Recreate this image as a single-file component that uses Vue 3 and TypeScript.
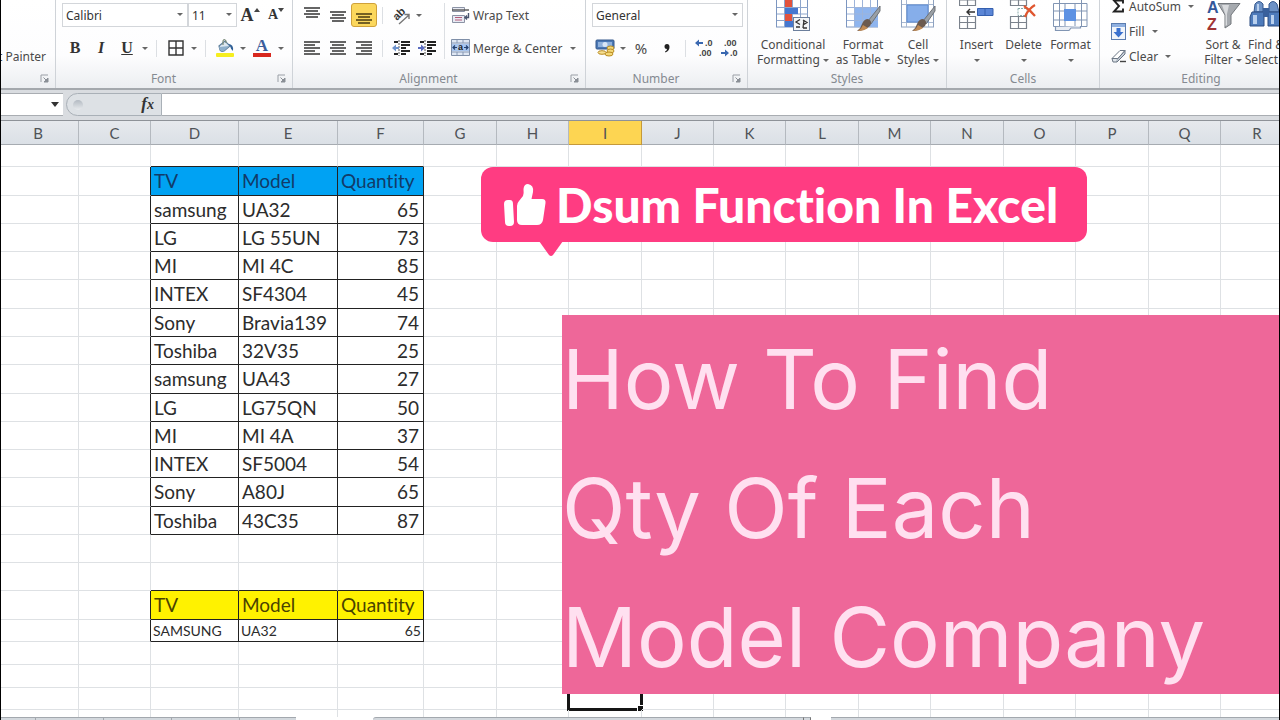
<script setup lang="ts">
interface Column {
  letter: string
  width: number
}

interface Row {
  height: number
  kind?: 'blue' | 'yellow' | 'data' | 'small'
  cells?: string[]
  cursor?: boolean
}

const columns: Column[] = [
  { letter: 'B', width: 81 },
  { letter: 'C', width: 72 },
  { letter: 'D', width: 88 },
  { letter: 'E', width: 99 },
  { letter: 'F', width: 86 },
  { letter: 'G', width: 73 },
  { letter: 'H', width: 72 },
  { letter: 'I', width: 73 },
  { letter: 'J', width: 72 },
  { letter: 'K', width: 72 },
  { letter: 'L', width: 73 },
  { letter: 'M', width: 72 },
  { letter: 'N', width: 73 },
  { letter: 'O', width: 72 },
  { letter: 'P', width: 73 },
  { letter: 'Q', width: 72 },
  { letter: 'R', width: 73 },
]

const rows: Row[] = [
  { height: 22 },
  { height: 29, kind: 'blue', cells: ['TV', 'Model', 'Quantity'] },
  { height: 28, kind: 'data', cells: ['samsung', 'UA32', '65'] },
  { height: 28, kind: 'data', cells: ['LG', 'LG 55UN', '73'] },
  { height: 28, kind: 'data', cells: ['MI', 'MI 4C', '85'] },
  { height: 29, kind: 'data', cells: ['INTEX', 'SF4304', '45'] },
  { height: 28, kind: 'data', cells: ['Sony', 'Bravia139', '74'] },
  { height: 28, kind: 'data', cells: ['Toshiba', '32V35', '25'] },
  { height: 29, kind: 'data', cells: ['samsung', 'UA43', '27'] },
  { height: 28, kind: 'data', cells: ['LG', 'LG75QN', '50'] },
  { height: 28, kind: 'data', cells: ['MI', 'MI 4A', '37'] },
  { height: 28, kind: 'data', cells: ['INTEX', 'SF5004', '54'] },
  { height: 29, kind: 'data', cells: ['Sony', 'A80J', '65'] },
  { height: 28, kind: 'data', cells: ['Toshiba', '43C35', '87'] },
  { height: 28 },
  { height: 28 },
  { height: 29, kind: 'yellow', cells: ['TV', 'Model', 'Quantity'] },
  { height: 22, kind: 'small', cells: ['SAMSUNG', 'UA32', '65'] },
  { height: 23 },
  { height: 23 },
  { height: 22, cursor: true },
  { height: 23 },
]

const FIRST = 2
const LAST = 4
const CURSOR_COL = 7

function text(row: Row, c: number): string {
  return row.cells && c >= FIRST && c <= LAST ? row.cells[c - FIRST] : ''
}

function cellClass(r: number, c: number): Record<string, boolean> {
  const row = rows[r]
  const inside = !!row.cells && c >= FIRST && c <= LAST
  const next = rows[r + 1]
  return {
    [row.kind ?? 'plain']: inside,
    num: inside && c === LAST && row.kind !== 'blue' && row.kind !== 'yellow',
    'edge-right': !!row.cells && c >= FIRST - 1 && c <= LAST,
    'edge-bottom': c >= FIRST && c <= LAST && (inside || !!next?.cells),
  }
}
</script>

<template>
  <div class="app">
    <header class="ribbon">
      <section class="group clipboard">
        <div class="tools">
          <div class="row"></div>
          <div class="row painter"><button>Format Painter</button></div>
        </div>
        <div class="caption"><span></span><button class="launch" aria-label="Clipboard options"><svg width="9" height="9" viewBox="0 0 9 9"><path d="M1 8V1H8" fill="none" stroke="#9a9fa6" /><path d="M3.5 3.5L8 8M8 4V8H4Z" fill="#8a8f96" stroke="#8a8f96" /></svg></button></div>
      </section>

      <section class="group font">
        <div class="tools">
          <div class="row">
            <span class="drop family"><select aria-label="Font"><option>Calibri</option></select><i class="tri"></i></span>
            <span class="drop size"><select aria-label="Font size"><option>11</option></select><i class="tri"></i></span>
            <button class="ic serif grow" aria-label="Increase font size">A<svg width="6" height="4" viewBox="0 0 6 4"><path d="M0 4L3 0L6 4Z" fill="#444" /></svg></button>
            <button class="ic serif shrink" aria-label="Decrease font size">A<svg width="6" height="4" viewBox="0 0 6 4"><path d="M0 0H6L3 4Z" fill="#444" /></svg></button>
          </div>
          <div class="row">
            <button class="ic serif">B</button>
            <button class="ic serif it">I</button>
            <button class="ic serif un">U</button>
            <button class="ar" aria-label="Underline styles"><i class="tri"></i></button>
            <i class="sep wide"></i>
            <button class="ic" aria-label="Borders"><svg width="16" height="16" viewBox="0 0 16 16"><path d="M1 1H15V15H1ZM8 1V15M1 8H15" fill="none" stroke="#333" stroke-width="1.4" /></svg></button>
            <button class="ar" aria-label="Border styles"><i class="tri"></i></button>
            <i class="sep wide"></i>
            <button class="ic" aria-label="Fill colour"><svg width="20" height="20" viewBox="0 0 20 20"><rect x="1" y="15" width="18" height="4" rx="1" fill="#f6ee1f" /><path d="M4 8L10 3L15 8L9 13Q7 14 5 12Z" fill="#dce8f1" stroke="#5e7f9c" stroke-width="1.2" /><path d="M4 9L14 8L9 13Q7 14 5 12Z" fill="#8eb0cc" /><path d="M8 7V3Q9 0 11 3V5" fill="none" stroke="#7a8a78" stroke-width="1.2" /><path d="M13 6Q19 6 18 13Q16 12 15 8Z" fill="#2f5f96" /></svg></button>
            <button class="ar" aria-label="Fill colours"><i class="tri"></i></button>
            <button class="ic serif tint" aria-label="Font colour">A</button>
            <button class="ar" aria-label="Font colours"><i class="tri"></i></button>
          </div>
        </div>
        <div class="caption"><span>Font</span><button class="launch" aria-label="Font options"><svg width="9" height="9" viewBox="0 0 9 9"><path d="M1 8V1H8" fill="none" stroke="#9a9fa6" /><path d="M3.5 3.5L8 8M8 4V8H4Z" fill="#8a8f96" stroke="#8a8f96" /></svg></button></div>
      </section>

      <section class="group align">
        <div class="tools split">
          <div>
            <div class="row">
              <button class="ic" aria-label="Top align"><svg width="16" height="18" viewBox="0 0 16 18"><path d="M0 2H16M2 5H14M0 8H16M2 11H14" stroke="#333" stroke-width="1.7" /></svg></button>
              <button class="ic" aria-label="Middle align"><svg width="16" height="18" viewBox="0 0 16 18"><path d="M0 6H16M2 9H14M0 12H16M2 15H14" stroke="#333" stroke-width="1.7" /></svg></button>
              <button class="ic on" aria-label="Bottom align"><svg width="16" height="18" viewBox="0 0 16 18"><path d="M0 8H16M2 11H14M0 14H16M2 17H14" stroke="#4a3b10" stroke-width="1.7" /></svg></button>
              <i class="sep"></i>
              <button class="ic" aria-label="Orientation"><svg width="24" height="22" viewBox="0 0 24 22"><text x="0" y="0" transform="translate(8 17) rotate(-45)" class="ab">ab</text><path d="M10 20L20 11M15.500 10.500H20V15" fill="none" stroke="#777" stroke-width="1.4" /></svg></button>
              <button class="ar" aria-label="Orientation options"><i class="tri"></i></button>
            </div>
            <div class="row">
              <button class="ic" aria-label="Align left"><svg width="16" height="14" viewBox="0 0 16 14"><path d="M0 1H16M0 4H11M0 7H16M0 10H11M0 13H16" stroke="#333" stroke-width="1.7" /></svg></button>
              <button class="ic" aria-label="Center"><svg width="16" height="14" viewBox="0 0 16 14"><path d="M0 1H16M2 4H14M0 7H16M2 10H14M0 13H16" stroke="#333" stroke-width="1.7" /></svg></button>
              <button class="ic" aria-label="Align right"><svg width="16" height="14" viewBox="0 0 16 14"><path d="M0 1H16M5 4H16M0 7H16M5 10H16M0 13H16" stroke="#333" stroke-width="1.7" /></svg></button>
              <i class="sep"></i>
              <button class="ic" aria-label="Decrease indent"><svg width="18" height="16" viewBox="0 0 18 16"><path d="M2 2H6M9 2H18M9 5H18M9 8H14M9 11H18M2 14H6M9 14H14" stroke="#222" stroke-width="1.8" /><path d="M7 0V16" stroke="#555" stroke-dasharray="2 1" /><path d="M0 8L4 4.500V7H7V9H4V11.500Z" fill="#6f93cc" /></svg></button>
              <button class="ic" aria-label="Increase indent"><svg width="18" height="16" viewBox="0 0 18 16"><path d="M2 2H6M9 2H18M9 5H18M9 8H14M9 11H18M2 14H6M9 14H14" stroke="#222" stroke-width="1.8" /><path d="M7 0V16" stroke="#555" stroke-dasharray="2 1" /><path d="M7 8L3 4.500V7H0V9H3V11.500Z" fill="#5a6cc0" /></svg></button>
            </div>
          </div>
          <i class="sep tall"></i>
          <div>
            <div class="row"><button class="lab"><svg width="19" height="18" viewBox="0 0 19 18"><path d="M1.500 1.500H13.500V5.500H1.500ZM1.500 9.500H13.500V16.500H1.500Z" fill="#e8eaf3" stroke="#8b93a5" /><path d="M1 4H18" stroke="#555" stroke-width="1.4" /><path d="M4 11.500H11M4 14H11" stroke="#b35a78" /><path d="M17.500 7V11.500H14M16 9.500L14 11.500L16 13.500" fill="none" stroke="#4a5670" stroke-width="1.4" /></svg>Wrap Text</button></div>
            <div class="row"><button class="lab"><svg width="19" height="18" viewBox="0 0 19 18"><path d="M.5.500H18.500V16.500H.5Z" fill="#dfe7f3" stroke="#7f8fa8" /><path d="M1 4H18M1 13H18M6 1V4M12 1V4M6 13V16M12 13V16" stroke="#8798b4" /><path d="M1 5H18V12H1Z" fill="#a9c6ee" /><path d="M2 8.500H6M13 8.500H17M4 6.500L2 8.500L4 10.500M15 6.500L17 8.500L15 10.500" fill="none" stroke="#23406f" stroke-width="1.2" /><text x="7" y="11" class="a">a</text></svg>Merge &amp; Center<i class="tri"></i></button></div>
          </div>
        </div>
        <div class="caption"><span>Alignment</span><button class="launch" aria-label="Alignment options"><svg width="9" height="9" viewBox="0 0 9 9"><path d="M1 8V1H8" fill="none" stroke="#9a9fa6" /><path d="M3.500 3.500L8 8M8 4V8H4Z" fill="#8a8f96" stroke="#8a8f96" /></svg></button></div>
      </section>

      <section class="group number">
        <div class="tools">
          <div class="row"><span class="drop format"><select aria-label="Number format"><option>General</option></select><i class="tri"></i></span></div>
          <div class="row">
            <button class="ic" aria-label="Accounting format"><svg width="20" height="18" viewBox="0 0 20 18"><rect x="1" y="1" width="18" height="9" rx="1" fill="#4b78b5" stroke="#34598c" /><rect x="3" y="3" width="14" height="5" fill="#8fb1dc" /><circle cx="10" cy="5.500" r="2.500" fill="#d9e6f6" /><ellipse cx="15.500" cy="9" rx="3.500" ry="2" fill="#f3d778" stroke="#b98b22" /><ellipse cx="15.500" cy="12" rx="3.500" ry="2" fill="#f3d778" stroke="#b98b22" /><ellipse cx="14" cy="15" rx="4" ry="2" fill="#f3d778" stroke="#b98b22" /><ellipse cx="7" cy="13.500" rx="4" ry="1.800" fill="#f6df92" stroke="#b98b22" /></svg></button>
            <button class="ar" aria-label="Currencies"><i class="tri"></i></button>
            <button class="ic pct">%</button>
            <button class="ic" aria-label="Comma style"><svg width="6" height="9" viewBox="0 0 6 9"><path d="M3 0Q5.500 0 5.500 3Q5.500 6.500 1.500 8.500L1 7.500Q3 6.500 3 5Q.5 5 .5 2.500Q.5 0 3 0Z" fill="#222" /></svg></button>
            <i class="sep"></i>
            <button class="ic" aria-label="Increase decimal"><svg width="20" height="20" viewBox="0 0 20 20"><text x="11" y="8" class="dec">.0</text><text x="5" y="18" class="dec">.00</text><path d="M1 5L5 1.500V4H9V6H5V8.500Z" fill="#3a68b0" /></svg></button>
            <button class="ic" aria-label="Decrease decimal"><svg width="20" height="20" viewBox="0 0 20 20"><text x="4" y="8" class="dec">.00</text><text x="10" y="18" class="dec">.0</text><path d="M9 15L5 11.500V14H1V16H5V18.500Z" fill="#3a68b0" /></svg></button>
          </div>
        </div>
        <div class="caption"><span>Number</span><button class="launch" aria-label="Number options"><svg width="9" height="9" viewBox="0 0 9 9"><path d="M1 8V1H8" fill="none" stroke="#9a9fa6" /><path d="M3.500 3.500L8 8M8 4V8H4Z" fill="#8a8f96" stroke="#8a8f96" /></svg></button></div>
      </section>

      <section class="group styles">
        <div class="bigs">
          <button class="big cond">
            <svg width="35" height="32" viewBox="0 0 35 32"><rect x=".5" y="-6" width="31" height="33" fill="#fff" stroke="#7c96c0" /><path d="M1 7.500H32M1 14H32M1 20.500H32M8.500 0V27M16.500 0V27M24.500 0V27" stroke="#8ea6cc" /><rect x="9" y="0" width="7" height="7" fill="#e2523c" /><rect x="9" y="8" width="13" height="6" fill="#4577cf" /><rect x="9" y="14" width="7" height="7" fill="#e2523c" /><rect x="9" y="21" width="8" height="6" fill="#4577cf" /><rect x="17.500" y="17.500" width="16" height="13" fill="#f4f6f8" stroke="#6c7f9c" /><path d="M24 19.500L20 22L24 24.500M20 27H24M27 20L31 22.500L27 25M27 28H31M28 20L27 28" fill="none" stroke="#333" stroke-width="1.3" /></svg>
            <span>Conditional</span><span>Formatting <i class="tri"></i></span>
          </button>
          <button class="big fmt">
            <svg width="35" height="32" viewBox="0 0 35 32"><rect x=".5" y="-6" width="31" height="33" fill="#fff" stroke="#7c96c0" /><rect x="9" y="8" width="23" height="19" fill="#8fb5ee" /><path d="M1 7.500H32M1 14H32M1 20.500H32M8.500 0V27M16.500 0V27M24.500 0V27" stroke="#9db4da" /><path d="M34 6L22 21L25 24L34 11Z" fill="#9aa0a6" stroke="#6d7176" /><path d="M22 19Q27 21 24 26Q18 31 11 31Q15 28 16 24Q18 19 22 19Z" fill="#6b5a50" /><path d="M12 31Q16 28 17 25L22 28Q18 31 12 31Z" fill="#c08a55" /></svg>
            <span>Format</span><span>as Table <i class="tri"></i></span>
          </button>
          <button class="big cell">
            <svg width="35" height="32" viewBox="0 0 35 32"><rect x=".5" y="-6" width="32" height="33" fill="#fff" stroke="#8ea2c0" /><path d="M1 4.500H32M1 22.500H32M5.500 0V27M27.500 0V27" stroke="#a9b9d2" /><rect x="6" y="5" width="21" height="17" fill="#86aeea" stroke="#5e8bd0" /><path d="M34 6L22 21L25 24L34 11Z" fill="#9aa0a6" stroke="#6d7176" /><path d="M22 19Q27 21 24 26Q18 31 11 31Q15 28 16 24Q18 19 22 19Z" fill="#6b5a50" /><path d="M12 31Q16 28 17 25L22 28Q18 31 12 31Z" fill="#c08a55" /></svg>
            <span>Cell</span><span>Styles <i class="tri"></i></span>
          </button>
        </div>
        <div class="caption plain"><span>Styles</span></div>
      </section>

      <section class="group cells">
        <div class="bigs">
          <button class="big std">
            <svg width="35" height="32" viewBox="0 0 35 32"><path d="M.5-4V5.500H16.500V-4M8.500 0V5.500M.5 0H16M.5 16.500H16.500V28.500H.5ZM8.500 16.500V28.500M.5 22.500H16.500" fill="#fff" stroke="#7b828c" stroke-width="1.2" /><path d="M18.500 8.500H34V15.500H18.500Z" fill="#5b86d6" stroke="#345fae" /><path d="M26 8.500V15.500" stroke="#345fae" /><path d="M8 12H16M11 9L8 12L11 15" fill="none" stroke="#333" stroke-width="1.4" /></svg>
            <span>Insert</span><span><i class="tri"></i></span>
          </button>
          <button class="big std">
            <svg width="35" height="32" viewBox="0 0 35 32"><path d="M4.500-4V5.500H20.500V-4M12.500 0V5.500M4.500 0H20M4.500 16.500H20.500V28.500H4.500ZM12.500 16.500V28.500M4.500 22.500H20.500" fill="#fff" stroke="#7b828c" stroke-width="1.2" /><path d="M12 8.500H21V15.500H12Z" fill="#fff" stroke="#8aa" stroke-dasharray="2 1" /><path d="M18 6Q24 10 29 16M29 5Q22 9 19 17" fill="none" stroke="#e0562f" stroke-width="2.200" /></svg>
            <span>Delete</span><span><i class="tri"></i></span>
          </button>
          <button class="big std">
            <svg width="35" height="32" viewBox="0 0 35 32"><path d="M.5 3.500H34V26.500H.5ZM6.500-1V26.500M28.500-1V26.500M.5 11H34M.5 20H34M12 3V26M22 3V26" fill="#fff" stroke="#8195b3" /><rect x="11" y="9" width="12" height="12" fill="#5d92e3" /><path d="M2.500 27V30.500H16L18 28H27.500V26" fill="#e9edf3" stroke="#8195b3" stroke-width="1.200" /></svg>
            <span>Format</span><span><i class="tri"></i></span>
          </button>
        </div>
        <div class="caption plain"><span>Cells</span></div>
      </section>

      <section class="group editing">
        <div class="bigs">
          <div class="stack">
            <button class="lab"><svg width="15" height="16" viewBox="0 0 15 16"><path d="M12 5.500V2.500H3L8 8L3 13.500H12V10.500" fill="none" stroke="#222" stroke-width="1.900" /></svg>AutoSum<i class="tri"></i></button>
            <button class="lab"><svg width="15" height="17" viewBox="0 0 15 17"><rect x=".5" y=".5" width="14" height="16" fill="#f1f5fa" stroke="#5b7db0" /><rect x="1" y="1" width="13" height="3" fill="#8fb0e0" /><path d="M5.500 5H9.500V9H12.500L7.500 14.500L2.500 9H5.500Z" fill="#3a71cf" /></svg>Fill<i class="tri"></i></button>
            <button class="lab"><svg width="15" height="14" viewBox="0 0 15 14"><path d="M1 9.500L9 1.500H14L6.500 10Z" fill="#fff" stroke="#6b7684" /><path d="M1 9.500H6.500L6 13H2Z" fill="#dfe4ea" stroke="#6b7684" /><path d="M6.500 10L14 1.500V5L6 13" fill="#c6ced8" stroke="#6b7684" /><path d="M9 12.500H15" stroke="#444" stroke-width="1.400" /></svg>Clear<i class="tri"></i></button>
          </div>
          <button class="big sort">
            <svg width="35" height="32" viewBox="0 0 35 32"><path d="M12 3.500H34L25 15V24L19 28V15Z" fill="#a6aaaf" stroke="#74787d" /><path d="M16 5H23L21 14V25L19.500 26V15Z" fill="#d9dbde" /><text x="1" y="13" class="az up">A</text><text x="1" y="30" class="az down">Z</text></svg>
            <span>Sort &amp;</span><span>Filter <i class="tri"></i></span>
          </button>
          <button class="big find">
            <svg width="35" height="32" viewBox="0 0 35 32"><path d="M6 4Q10-1 14 4V12H5ZM20 4Q24-1 28 4L30 12H20Z" fill="#6d92c6" stroke="#36598f" /><path d="M3 12H15V26H1V17ZM19 12H31L33 17V26H19Z" fill="#4e7bbb" stroke="#2c4d80" /><path d="M14 8H20V17H14Z" fill="#39609c" /><path d="M4 15H8V24H4ZM22 15H25V24H22ZM8 4H10V11H8Z" fill="#b9d0ee" /></svg>
            <span>Find &amp;</span><span>Select <i class="tri"></i></span>
          </button>
        </div>
        <div class="caption plain"><span>Editing</span></div>
      </section>
    </header>

    <div class="formula">
      <button class="namebox" aria-label="Name box"><svg width="8" height="5" viewBox="0 0 8 5"><path d="M0 0H8L4 5Z" fill="#333" /></svg></button>
      <div class="pill"><i class="knob"></i><button class="fx"><i>f</i><sub>x</sub></button></div>
      <input type="text" aria-label="Formula bar">
    </div>

    <main class="sheet">
      <table>
        <colgroup>
          <col v-for="col in columns" :key="col.letter" :style="{ width: col.width + 'px' }">
        </colgroup>
        <thead>
          <tr>
            <th v-for="(col, c) in columns" :key="col.letter" scope="col" :class="{ active: c === CURSOR_COL }">{{ col.letter }}</th>
          </tr>
        </thead>
        <tbody>
          <tr v-for="(row, r) in rows" :key="r" :style="{ height: row.height + 'px' }">
            <td v-for="(col, c) in columns" :key="col.letter" :class="cellClass(r, c)">{{ text(row, c) }}<div v-if="row.cursor && c === CURSOR_COL" class="cursor"></div></td>
          </tr>
        </tbody>
      </table>

      <div class="banner">
        <svg width="42" height="42" viewBox="0 0 42 42"><path d="M4 16H6Q9 16 9 20L10 38Q10 42 6 42H5Q1 42 1 38L0 20Q0 16 4 16Z" fill="#fff" /><path d="M13 22Q13 19 15 17L19 12Q20 9 19.500 5Q20 0 24 0Q30 1 29 8L27.500 15H38Q42 15 41.500 19L39 36Q38 41 33 41H18Q13 41 13 36Z" fill="#fff" /></svg>
        <span>Dsum Function In Excel</span>
        <svg class="tail" width="24" height="16" viewBox="0 0 24 16"><path d="M0 0H24L14 14Q12 16 10 14Z" fill="#ff3c82" /></svg>
      </div>

      <div class="promo">How To Find<br>Qty Of Each<br>Model Company</div>
    </main>

    <footer class="tabs">
      <i class="nav"></i><i class="tab"></i><i class="tab"></i><i class="tab"></i><i class="tab last"></i><i class="current"></i><i class="track"></i><i class="grip"></i><i class="scroll"></i>
    </footer>
  </div>
</template>

<style>
body {
  margin: 0;
}
</style>

<style scoped>
.app {
  box-sizing: border-box;
  height: 100vh;
  overflow: hidden;
  display: flex;
  flex-direction: column;
  border-left: 1px solid #000;
  border-right: 1px solid #000;
  background: #fff;
  font-family: "Noto Sans", "Open Sans", sans-serif;
  font-size: 12px;
  font-variant-ligatures: none;
  color: #4a4a4a;
}
button {
  border: 0;
  padding: 0;
  margin: 0;
  background: none;
  font: inherit;
  color: inherit;
  flex: none;
}
svg {
  display: block;
  flex: none;
}
.ribbon {
  display: flex;
  flex: none;
  height: 90px;
  box-sizing: border-box;
  overflow: hidden;
  background: linear-gradient(#fff 0, #fdfdfe 55px, #eceef1 88px);
  border-bottom: 2px solid #a4a8ad;
}
.group {
  flex: none;
  display: flex;
  flex-direction: column;
  justify-content: space-between;
  box-sizing: border-box;
  border-right: 1px solid #cfd3d8;
  padding-bottom: 1px;
}
.clipboard { width: 55px; overflow: hidden; }
.font { width: 237px; }
.align { width: 293px; }
.number { width: 162px; }
.styles { width: 199px; }
.cells { width: 153px; }
.editing { width: 202px; border-right: 0; }
.tools {
  display: flex;
  flex-direction: column;
  gap: 9px;
  padding: 3px 0 0 6px;
}
.tools.split {
  flex-direction: row;
  gap: 0;
}
.split > div {
  display: flex;
  flex-direction: column;
  gap: 9px;
}
.row {
  display: flex;
  align-items: center;
  height: 24px;
}
.painter {
  justify-content: flex-end;
  padding: 8px 9px 0 0;
  white-space: nowrap;
}
.caption {
  display: flex;
  align-items: center;
  height: 18px;
  color: #858a91;
  padding-right: 6px;
}
.caption.plain { padding-right: 0; }
.caption span {
  flex: 1;
  text-align: center;
  padding-right: 6px;
}
.caption.plain span { padding-right: 0; }
.ic {
  width: 26px;
  height: 24px;
  display: flex;
  align-items: center;
  justify-content: center;
}
.ic.on {
  box-sizing: border-box;
  background: #fbd75c;
  border: 1px solid #cfa13a;
  border-radius: 3px;
}
.ar {
  width: 10px;
  height: 24px;
  display: flex;
  align-items: center;
  justify-content: center;
}
.tri {
  display: inline-block;
  border: 3px solid transparent;
  border-top-color: #666;
  border-bottom-width: 0;
  vertical-align: middle;
  flex: none;
}
.sep {
  width: 1px;
  height: 17px;
  margin: 0 5px;
  background: #dcdfe3;
  flex: none;
}
.sep.wide { margin: 0 6px; }
.sep.tall { height: 56px; margin: 0 6px 0 4px; }
.drop {
  position: relative;
  height: 24px;
  flex: none;
}
.drop select {
  appearance: none;
  width: 100%;
  height: 100%;
  border: 1px solid #d3d6da;
  border-radius: 0;
  background: #fff;
  font: inherit;
  color: #333;
  padding: 0 3px;
  margin: 0;
}
.drop .tri {
  position: absolute;
  right: 5px;
  top: 10px;
}
.family { width: 126px; }
.size { width: 49px; }
.format { width: 151px; }
.serif {
  font-family: "Liberation Serif", serif;
  font-weight: bold;
  font-size: 16px;
  color: #333;
}
.it { font-style: italic; }
.un { text-decoration: underline; }
.grow { font-size: 18px; }
.shrink { font-size: 14px; }
.grow svg, .shrink svg { align-self: flex-start; margin-top: 5px; }
.tint {
  width: 28px;
  color: #3c5d9c;
  line-height: 15px;
  font-size: 17px;
  background: linear-gradient(#d8281f, #d8281f) center bottom 3px / 18px 4px no-repeat;
  padding-bottom: 5px;
  box-sizing: border-box;
}
.ab { font: bold 11px "Liberation Sans", sans-serif; fill: #333; }
.a { font: bold 9px "Liberation Sans", sans-serif; fill: #222; }
.dec { font: bold 9px "Liberation Sans", sans-serif; fill: #444; }
.az { font: bold 16px "Liberation Sans", sans-serif; }
.up { fill: #34589a; }
.down { fill: #a03434; }
.pct { font-size: 15px; }
.lab {
  display: flex;
  align-items: center;
  gap: 3px;
  height: 24px;
}
.lab .tri { margin-left: 4px; }
.bigs {
  display: flex;
  padding-left: 6px;
}
.big {
  display: flex;
  flex-direction: column;
  align-items: center;
  line-height: 15px;
  white-space: nowrap;
}
.big svg { margin-bottom: 5px; }
.big span { height: 15px; }
.cond { width: 78px; }
.fmt { width: 62px; }
.cell { width: 48px; }
.std { width: 47px; }
.stack {
  width: 90px;
  padding-left: 5px;
  margin-top: -6px;
  display: flex;
  flex-direction: column;
  gap: 1px;
}
.sort { width: 44px; }
.find { width: 42px; }
.formula {
  flex: none;
  display: flex;
  height: 23px;
  padding: 3px 0 4px;
  background: #d9dce0;
  border-bottom: 1px solid #8e9298;
}
.namebox {
  width: 62px;
  background: #fff;
  display: flex;
  align-items: center;
  justify-content: flex-end;
  padding-right: 4px;
  box-sizing: border-box;
  border-bottom: 1px solid #a9adb2;
  border-top: 1px solid #a9adb2;
}
.pill {
  width: 96px;
  margin-left: 3px;
  box-sizing: border-box;
  border: 1px solid #a9b0b7;
  border-radius: 12px 0 0 12px;
  background: #dde1e5;
  display: flex;
  justify-content: space-between;
  align-items: center;
  padding: 0 7px 0 6px;
}
.knob {
  width: 10px;
  height: 10px;
  border-radius: 5px;
  background: linear-gradient(#b3bac2, #e8ebee);
}
.fx {
  font-family: "Liberation Serif", serif;
  font-weight: bold;
  font-size: 17px;
  line-height: 18px;
  color: #333;
}
.fx sub { font-size: 14px; font-style: italic; vertical-align: baseline; }
.formula input {
  flex: 1;
  min-width: 0;
  border: 0;
  border-top: 1px solid #a9adb2;
  border-bottom: 1px solid #a9adb2;
  padding: 0 4px;
  background: #fff;
}
.sheet {
  flex: 1;
  min-height: 0;
  position: relative;
  overflow: hidden;
}
/* The sheet is scrolled a little way into column B. */
table {
  width: 1296px;
  margin-left: -3px;
  table-layout: fixed;
  border-collapse: separate;
  border-spacing: 0;
  font-family: Lato, "Noto Sans", sans-serif;
  color: #2c2c2c;
}
th {
  box-sizing: border-box;
  height: 24px;
  padding: 0;
  background: linear-gradient(#e6e9ed, #dbe0e6);
  border-right: 1px solid #b4b9bf;
  border-bottom: 1px solid #a6abb1;
  font-weight: normal;
  font-size: 15px;
  line-height: 20px;
  color: #4f5357;
}
th.active {
  background: #fdd552;
  border-color: #c5993a;
}
td {
  box-sizing: border-box;
  padding: 0 4px 0 3px;
  border-right: 1px solid #dee1e4;
  border-bottom: 1px solid #dee1e4;
  font-size: 19px;
  line-height: 20px;
  white-space: nowrap;
  position: relative;
  vertical-align: middle;
}
td.num { text-align: right; }
td.edge-right { border-right-color: #222; }
td.edge-bottom { border-bottom-color: #222; }
td.blue { background: #00a2f3; color: #123a68; }
td.yellow { background: #fff200; color: #4a4300; }
td.small { font-size: 14px; padding: 0 2px; }
.cursor {
  position: absolute;
  inset: -2px;
  border: 3px solid #151515;
}
.cursor::after {
  content: "";
  position: absolute;
  right: -4px;
  bottom: -4px;
  width: 5px;
  height: 5px;
  background: #151515;
  border: 1px solid #fff;
}
.banner {
  position: absolute;
  left: 480px;
  top: 46px;
  height: 75px;
  display: flex;
  align-items: center;
  gap: 10px;
  padding: 0 29px 0 23px;
  border-radius: 12px;
  background: #ff3c82;
  color: #fff;
  font-family: Lato, sans-serif;
  font-weight: 900;
  font-size: 48px;
  line-height: 56px;
  white-space: nowrap;
}
.tail {
  position: absolute;
  left: 58px;
  top: 74px;
}
.promo {
  position: absolute;
  left: 561px;
  right: 0;
  top: 194px;
  height: 379px;
  box-sizing: border-box;
  background: #ee6799;
  color: #ffe0f0;
  font-family: Inter, sans-serif;
  font-weight: 400;
  font-size: 83px;
  line-height: 129px;
  white-space: nowrap;
}
.tabs {
  flex: none;
  display: flex;
  height: 3px;
  background: #fff;
}
.tabs i {
  box-sizing: border-box;
  border-top: 1px solid #a3a8ae;
  background: #d3d8dd;
}
.nav { width: 34px; }
.tab { width: 68px; border-left: 1px solid #a3a8ae; }
.tab.last { width: 57px; }
.tabs .current { width: 77px; background: #fff; border-color: #fff; }
.track { width: 430px; border-radius: 3px 0 0 0; }
.grip { width: 8px; border-left: 1px solid #777; border-right: 1px solid #777; }
.scroll { flex: 1; margin-left: 20px; }
</style>
